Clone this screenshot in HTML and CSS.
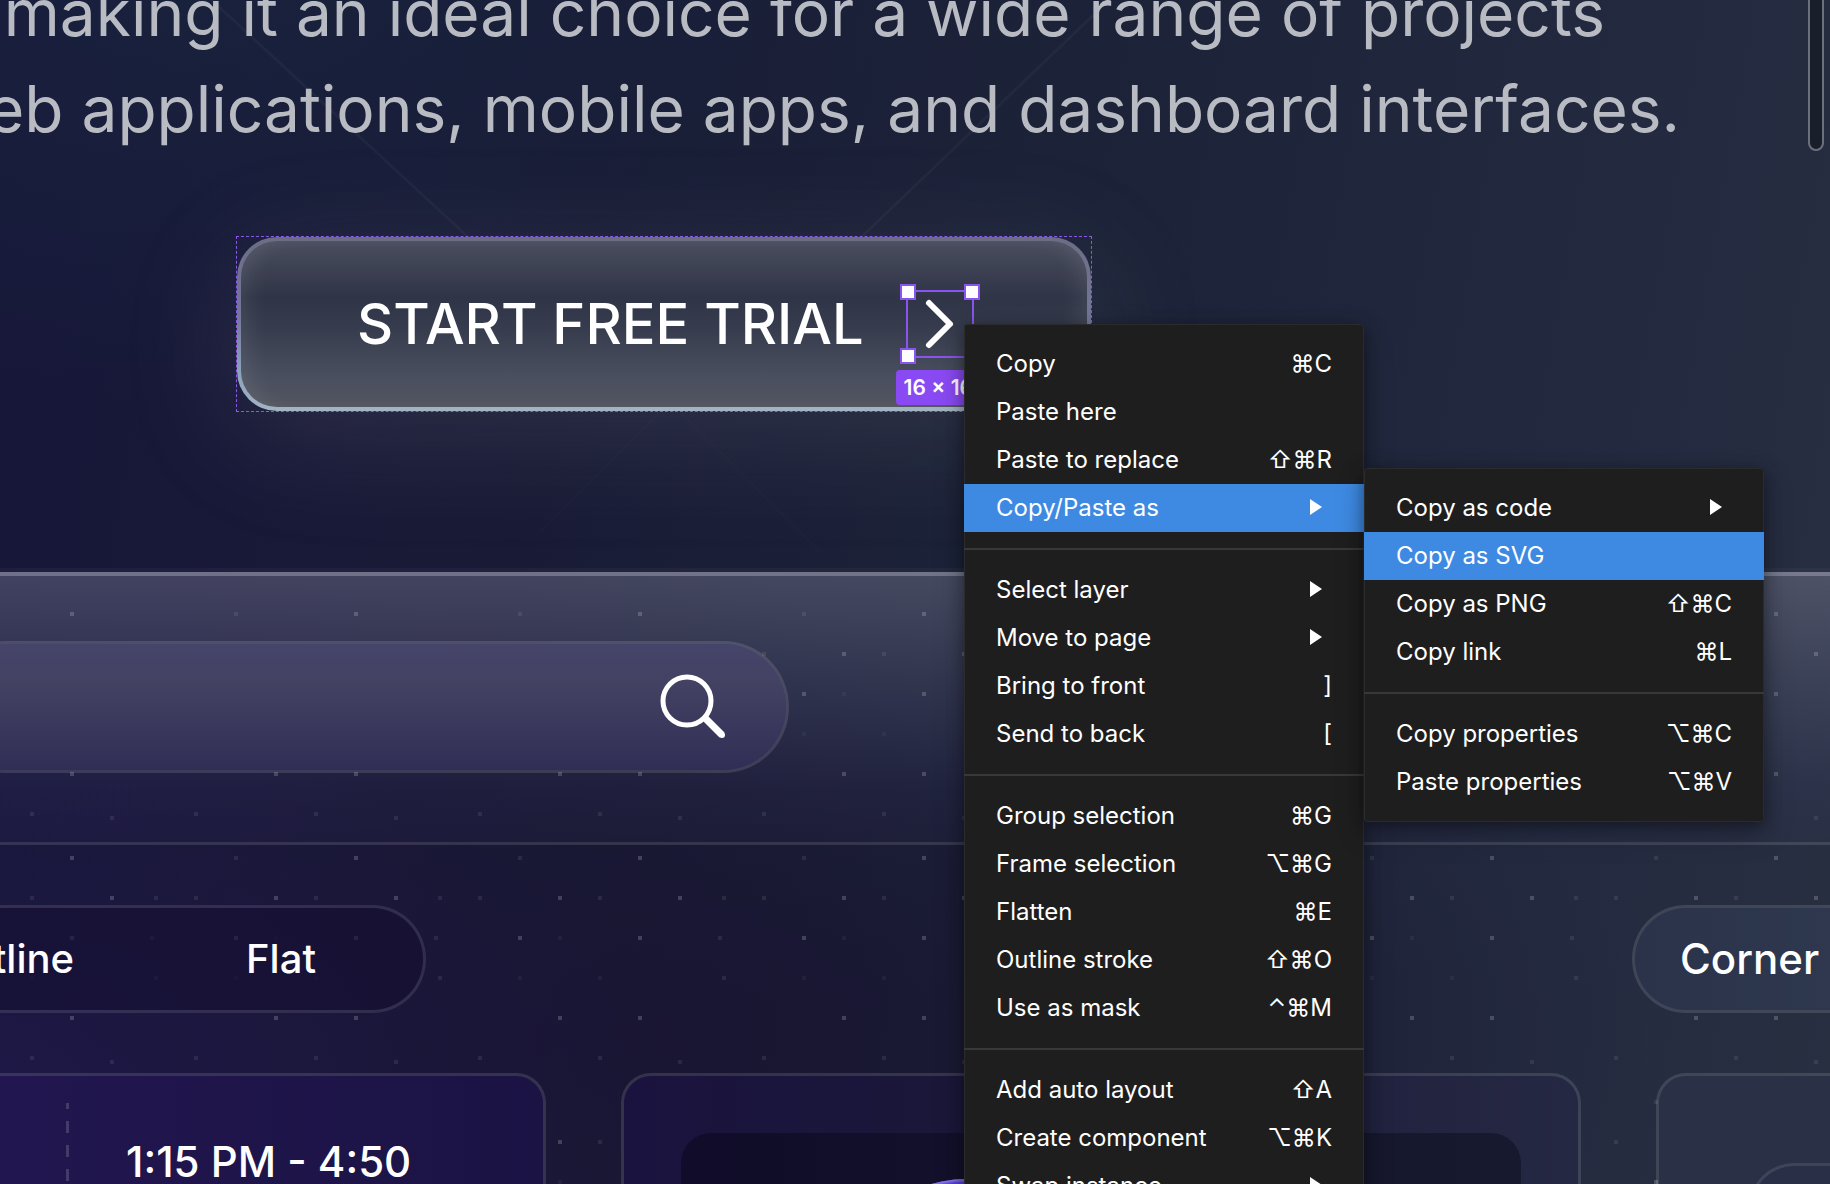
FILE: index.html
```html
<!DOCTYPE html>
<html lang="en">
<head>
<meta charset="utf-8">
<title>Icon library</title>
<link rel="stylesheet" href="styles.css">
</head>
<body>
<main class="canvas">
  <section class="hero">
    <svg class="hero-lines" aria-hidden="true">
      <path d="M190 -20 L480 248 M850 248 L1130 -20"/>
      <path class="faint" d="M660 412 L540 532 M680 412 L820 552"/>
    </svg>
    <p class="lead">
      <span class="lead-line">making it an ideal choice for a wide range of projects</span>
      <span class="lead-line lead-line-last">web applications, mobile apps, and dashboard interfaces.</span>
    </p>
    <div class="cta-frame">
      <button class="cta" type="button">
        <span>START FREE TRIAL</span>
        <span class="icon-frame">
          <svg width="64" height="64" viewBox="0 0 64 64" aria-hidden="true"><path d="M21 11 L42 32 L21 53" fill="none" stroke="#fff" stroke-width="6" stroke-linecap="round" stroke-linejoin="round"/></svg>
          <i class="handle top left"></i>
          <i class="handle top right"></i>
          <i class="handle bottom left"></i>
          <span class="size-badge">16 × 16</span>
        </span>
      </button>
    </div>
    <div class="scroll-thumb"></div>
  </section>

  <section class="panel">
    <svg class="dots" aria-hidden="true">
      <defs>
        <pattern id="dot-grid" width="284" height="244" patternUnits="userSpaceOnUse">
          <g fill="#fff">
            <path fill-opacity=".18" d="M70 36h4v4h-4z M110 76h4v4h-4z M274 76h4v4h-4z M70 116h4v4h-4z M234 116h4v4h-4z M70 196h4v4h-4z M274 196h4v4h-4z"/>
            <path fill-opacity=".08" d="M234 36h4v4h-4z M30 76h4v4h-4z M154 76h4v4h-4z M194 76h4v4h-4z M150 116h4v4h-4z M154 156h4v4h-4z M30 236h4v4h-4z M194 236h4v4h-4z M110 240h4v4h-4z"/>
            <path fill-opacity=".04" d="M274 116h4v4h-4z M30 156h4v4h-4z M234 156h4v4h-4z"/>
          </g>
        </pattern>
      </defs>
      <rect width="100%" height="100%" fill="url(#dot-grid)"/>
    </svg>

    <header class="panel-head">
      <div class="search">
        <input class="search-input" type="search" aria-label="Search">
        <svg class="search-icon" width="66" height="66" viewBox="0 0 66 66" aria-hidden="true">
          <circle cx="27" cy="27" r="24" fill="none" stroke="#fff" stroke-width="5"/>
          <path d="M44 43 L62 61" stroke="#fff" stroke-width="7"/>
          <circle cx="62" cy="61" r="3" fill="#fff"/>
        </svg>
      </div>
    </header>

    <div class="filters">
      <div class="tabs">
        <button type="button">Outline</button>
        <button type="button">Flat</button>
      </div>
      <button class="corner" type="button">Corner</button>
    </div>

    <div class="cards">
      <article class="card schedule">
        <div class="divider"></div>
        <span class="time">1:15 PM - 4:50</span>
      </article>
      <article class="card media">
        <div class="screen"><div class="orb"></div></div>
      </article>
      <article class="card control">
        <div class="chip"></div>
      </article>
    </div>
  </section>
</main>

<nav class="menu main-menu" aria-label="Layer">
  <ul>
    <li><button type="button">Copy<kbd>⌘C</kbd></button></li>
    <li><button type="button">Paste here</button></li>
    <li><button type="button">Paste to replace<kbd>⇧⌘R</kbd></button></li>
    <li>
      <button class="active" type="button">Copy/Paste as<i class="arrow"></i></button>
    </li>
  </ul>
  <ul>
    <li><button type="button">Select layer<i class="arrow"></i></button></li>
    <li><button type="button">Move to page<i class="arrow"></i></button></li>
    <li><button type="button">Bring to front<kbd>]</kbd></button></li>
    <li><button type="button">Send to back<kbd>[</kbd></button></li>
  </ul>
  <ul>
    <li><button type="button">Group selection<kbd>⌘G</kbd></button></li>
    <li><button type="button">Frame selection<kbd>⌥⌘G</kbd></button></li>
    <li><button type="button">Flatten<kbd>⌘E</kbd></button></li>
    <li><button type="button">Outline stroke<kbd>⇧⌘O</kbd></button></li>
    <li><button type="button">Use as mask<kbd>⌃⌘M</kbd></button></li>
  </ul>
  <ul>
    <li><button type="button">Add auto layout<kbd>⇧A</kbd></button></li>
    <li><button type="button">Create component<kbd>⌥⌘K</kbd></button></li>
    <li><button type="button">Swap instance<i class="arrow"></i></button></li>
  </ul>
</nav>

<nav class="menu sub-menu" aria-label="Copy/Paste as">
  <ul>
    <li><button type="button">Copy as code<i class="arrow"></i></button></li>
    <li><button class="active" type="button">Copy as SVG</button></li>
    <li><button type="button">Copy as PNG<kbd>⇧⌘C</kbd></button></li>
    <li><button type="button">Copy link<kbd>⌘L</kbd></button></li>
  </ul>
  <ul>
    <li><button type="button">Copy properties<kbd>⌥⌘C</kbd></button></li>
    <li><button type="button">Paste properties<kbd>⌥⌘V</kbd></button></li>
  </ul>
</nav>
</body>
</html>
```
FILE: styles.css
```css
:root {
  --purple: #8a55ee;
  --line: rgba(255, 255, 255, .12);
}

* { box-sizing: border-box; }

body {
  position: relative;
  margin: 0;
  height: 100vh;
  overflow: hidden;
  color: #fff;
  font-family: Inter, "Liberation Sans", sans-serif;
  background: #1a1e36;
}

button {
  margin: 0;
  padding: 0;
  border: 0;
  background: none;
  color: inherit;
  font: inherit;
}

.canvas {
  display: flex;
  flex-direction: column;
  height: 100%;
  overflow: hidden;
  background:
    radial-gradient(ellipse 700px 420px at 0 92%, rgba(36, 26, 88, .45), transparent),
    radial-gradient(ellipse 1000px 440px at 36% 88%, rgba(24, 17, 48, .75), transparent),
    radial-gradient(ellipse 900px 400px at 10% 0, rgba(26, 42, 64, .5), transparent),
    linear-gradient(100deg, #17173a 0%, #191b36 30%, #1c2338 55%, #242b40 85%, #282f41 100%);
}

/* Hero */

.hero {
  position: relative;
  flex: none;
}

.hero-lines {
  position: absolute;
  inset: 0;
  width: 100%;
  height: 100%;
  fill: none;
  stroke: rgba(255, 255, 255, .03);
  stroke-width: 3;
}

.hero-lines .faint { stroke: rgba(255, 255, 255, .01); }

.lead {
  position: relative;
  display: flex;
  flex-direction: column;
  align-items: flex-end;
  margin: -35px 0 79px;
  color: #b9bbc3;
  font-size: 64px;
  line-height: 96px;
  white-space: nowrap;
}

.lead-line { padding-right: 225px; }
.lead-line-last { padding-right: 150px; }

.cta-frame {
  position: relative;
  width: 856px;
  margin: 0 0 160px 236px;
  border: 1px dashed var(--purple);
}

.cta {
  display: flex;
  align-items: center;
  gap: 44px;
  width: 100%;
  height: 174px;
  padding: 0 116px;
  border: 4px solid transparent;
  border-radius: 40px;
  background:
    linear-gradient(#4a4e5f 0, #2f3446 34%, #363c4d 52%, #4a4f5f 82%, #52555f 100%) padding-box,
    linear-gradient(#6c6d84 0, #74769a 45%, #8a9fb8 75%, #a3b5c4 100%) border-box;
  box-shadow:
    inset 18px 0 24px -12px rgba(255, 255, 255, .1),
    inset -18px 0 24px -12px rgba(255, 255, 255, .1),
    0 24px 120px rgba(160, 160, 170, .16);
  font-size: 56px;
  font-weight: 500;
  white-space: nowrap;
}

.icon-frame {
  position: relative;
  flex: none;
  width: 64px;
  height: 64px;
  outline: 2px solid var(--purple);
}

.icon-frame svg { display: block; }

.handle {
  position: absolute;
  width: 16px;
  height: 16px;
  border: 2px solid var(--purple);
  background: #fff;
}

.handle.top { top: -8px; }
.handle.bottom { bottom: -8px; }
.handle.left { left: -8px; }
.handle.right { right: -8px; }

.size-badge {
  position: absolute;
  top: 78px;
  left: -12px;
  padding: 1px 8px 0;
  border-radius: 4px;
  background: #8a4af3;
  font-size: 21px;
  font-weight: 600;
  line-height: 34px;
}

.scroll-thumb {
  position: absolute;
  top: -40px;
  right: 6px;
  width: 16px;
  height: 191px;
  border: 2px solid #6a707c;
  border-radius: 8px;
  background: #191e2b;
}

/* Library panel */

.panel {
  position: relative;
  flex: 1;
  border-top: 4px solid rgba(200, 200, 220, .5);
  box-shadow: 0 -4px 0 rgba(255, 255, 255, .03);
}

.dots {
  position: absolute;
  inset: 0;
  width: 100%;
  height: 100%;
}

.panel-head {
  padding: 65px 0 69px;
  border-bottom: 3px solid var(--line);
  background: linear-gradient(rgba(190, 190, 215, .25), rgba(170, 170, 205, .17) 35%, rgba(100, 95, 160, .08) 80%, rgba(100, 95, 160, .04)) padding-box;
}

.search {
  position: relative;
  display: flex;
  align-items: center;
  width: 849px;
  height: 132px;
  margin-left: -60px;
  padding: 0 60px;
  border: 3px solid rgba(255, 255, 255, .12);
  border-radius: 66px;
  background: linear-gradient(#45446a, #434263 30%, #302e55) padding-box;
}

.search-input {
  flex: 1;
  height: 100%;
  border: 0;
  outline: 0;
  background: none;
  color: inherit;
  font: inherit;
}

.filters {
  position: relative;
  display: flex;
  justify-content: space-between;
  margin: 60px -120px 60px -280px;
  font-size: 42px;
  font-weight: 500;
}

.tabs {
  display: flex;
  justify-content: flex-end;
  width: 706px;
  height: 108px;
  padding: 0 21px;
  border: 3px solid rgba(255, 255, 255, .1);
  border-radius: 54px;
  background: rgba(22, 15, 50, .6) padding-box;
  font-size: 40px;
}

.tabs button { padding: 0 86px 2px; }

.corner {
  width: 318px;
  height: 108px;
  padding: 0 45px 2px;
  border: 3px solid rgba(255, 255, 255, .12);
  border-radius: 54px;
  background: linear-gradient(90deg, #2a3349, #303a50) padding-box;
  text-align: left;
}

.cards {
  position: relative;
  display: flex;
  gap: 75px;
  margin-left: -414px;
}

.card {
  flex: none;
  width: 960px;
  height: 480px;
  border: 3px solid rgba(255, 255, 255, .12);
  border-radius: 30px;
}

.schedule {
  display: flex;
  gap: 57px;
  padding: 27px 0 0 477px;
  background: linear-gradient(90deg, #21164f 45%, #1b1344) padding-box;
}

.divider {
  width: 3px;
  background: repeating-linear-gradient(rgba(255, 255, 255, .16) 0 6px, transparent 6px 18px, rgba(255, 255, 255, .16) 18px 24px);
}

.time {
  padding-top: 32px;
  font-size: 42px;
  font-weight: 500;
  line-height: 54px;
}

.media {
  padding: 57px;
  background: linear-gradient(90deg, #1a133f, #1a1838 40%, #252843) padding-box;
}

.screen {
  height: 360px;
  padding: 46px 0 0 156px;
  border-radius: 30px;
  background: linear-gradient(90deg, #100c29, #171a2e);
}

.orb {
  width: 260px;
  height: 260px;
  border-radius: 50%;
  background: #5040d8;
  box-shadow: inset 2px 2px 2px #8c74ea;
}

.control {
  padding: 87px 90px;
  background: #2a3046 padding-box;
}

.chip {
  height: 90px;
  border: 3px solid rgba(255, 255, 255, .1);
  border-radius: 45px;
  background: rgba(40, 48, 70, .4);
}

/* Context menus */

.menu {
  position: absolute;
  width: 400px;
  border-radius: 4px;
  background: #1e1e1e;
  box-shadow: inset 0 0 0 1px #2b2b2d, 0 4px 16px rgba(0, 0, 0, .4), 0 10px 32px rgba(0, 0, 0, .2);
  font-size: 24px;
}

.main-menu { top: 324px; left: 964px; }
.sub-menu { top: 468px; left: 1364px; }

.menu ul {
  margin: 0;
  padding: 16px 0;
  list-style: none;
}

.menu ul + ul { border-top: 2px solid #383838; }

.menu button {
  display: flex;
  align-items: center;
  justify-content: space-between;
  width: 100%;
  height: 48px;
  padding: 0 32px 2px;
}

.menu button.active { background: #3e8ae2; }

.menu kbd { font: inherit; }

.arrow {
  width: 12px;
  height: 16px;
  margin-right: 10px;
  background: #fff;
  clip-path: polygon(0 0, 100% 50%, 0 100%);
}
```
